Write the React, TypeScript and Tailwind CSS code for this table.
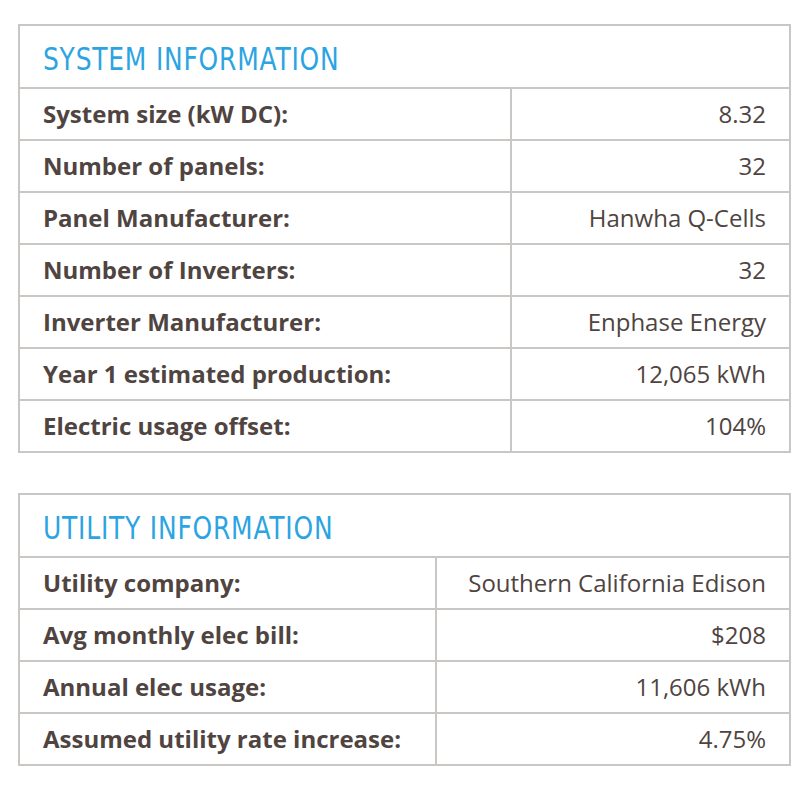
const systemRows = [
  ["System size (kW DC):", "8.32"],
  ["Number of panels:", "32"],
  ["Panel Manufacturer:", "Hanwha Q-Cells"],
  ["Number of Inverters:", "32"],
  ["Inverter Manufacturer:", "Enphase Energy"],
  ["Year 1 estimated production:", "12,065 kWh"],
  ["Electric usage offset:", "104%"],
];

const utilityRows = [
  ["Utility company:", "Southern California Edison"],
  ["Avg monthly elec bill:", "$208"],
  ["Annual elec usage:", "11,606 kWh"],
  ["Assumed utility rate increase:", "4.75%"],
];

interface InfoTableProps {
  title: string;
  rows: string[][];
  labelWidth: string;
}

const InfoTable = ({ title, rows, labelWidth }: InfoTableProps) => (
  <div className="border-2 border-[#c9c6c3] bg-white">
    {/* Heading */}
    <div className="h-[61px] flex items-center px-[23px] pt-[5px]">
      <h2 className="inline-block origin-left [transform:scaleX(0.78)] text-[32px] font-normal tracking-[1px] text-[#2ca4e2] font-['DejaVu_Sans',sans-serif] leading-none whitespace-nowrap">
        {title}
      </h2>
    </div>

    {/* Rows */}
    {rows.map(([label, value]) => (
      <div
        key={label}
        className="flex border-t-2 border-[#c9c6c3] h-[52px] text-[24px] text-[#4f443f] font-['Open_Sans',sans-serif]"
      >
        <div
          className={`${labelWidth} shrink-0 flex items-center px-[23px] font-bold border-r-2 border-[#c9c6c3] whitespace-nowrap`}
        >
          {label}
        </div>
        <div className="flex-1 flex items-center justify-end px-[23px] whitespace-nowrap">
          {value}
        </div>
      </div>
    ))}
  </div>
);

export default function App() {
  return (
    <div className="w-[810px] h-[798px] bg-white pt-[24px] pl-[18px]">
      <div className="w-[773px] flex flex-col gap-[40px]">
        <InfoTable
          title="SYSTEM INFORMATION"
          rows={systemRows}
          labelWidth="w-[492px]"
        />
        <InfoTable
          title="UTILITY INFORMATION"
          rows={utilityRows}
          labelWidth="w-[417px]"
        />
      </div>
    </div>
  );
}
